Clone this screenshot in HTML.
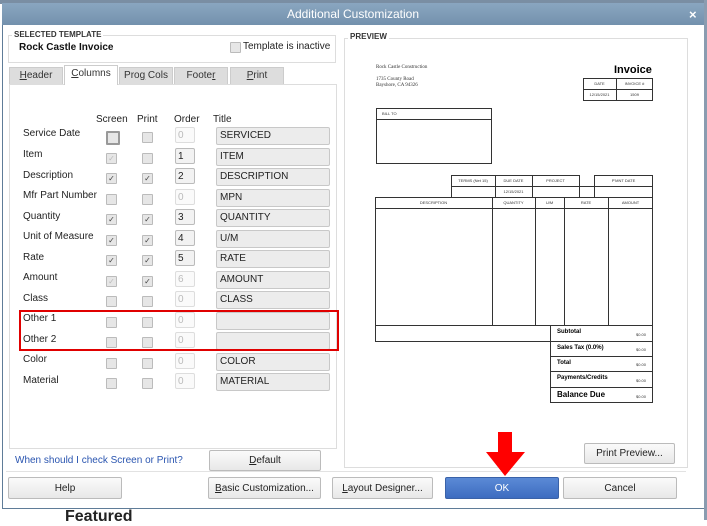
<!DOCTYPE html><html><head><style>
body{margin:0;width:707px;height:520px;background:#fff;font-family:"Liberation Sans",sans-serif;position:relative;overflow:hidden;font-size:10px}
.a{position:absolute}
.dlg{left:2px;top:3px;width:701px;height:504px;background:#fff;border:1px solid #5f7c98}
.title{left:2px;top:3px;width:702px;height:22px;background:linear-gradient(#8aa6c0,#7391ad);color:#fff;font-size:12px;text-align:center;line-height:22px}
.lbl{font-size:10px;color:#222}
.cb{width:9px;height:9px;border:1px solid #bbb;background:#e6e6e6;border-radius:1px;font-size:8px;line-height:9px;text-align:center;color:#444}
.ord{width:20px;height:16px;border:1px solid #ddd;border-radius:2px;background:#fafafa;color:#bbb;font-size:10px;line-height:16px;padding-left:2px;box-sizing:border-box}
.ord.on{border-color:#bbb;color:#222;background:#f2f2f2}
.tt{width:114px;height:18px;border:1px solid #c8c8c8;border-radius:2px;background:#ececec;font-size:10px;line-height:16px;padding-left:3px;box-sizing:border-box;color:#222}
.btn{height:21px;border:1px solid #bbb;border-radius:2px;background:linear-gradient(#fafafa,#e8e8e8);font-size:10px;text-align:center;line-height:20px;box-sizing:border-box;color:#222}
.tab{top:67px;height:17px;background:#ddd;border:1px solid #ccc;border-bottom:none;font-size:10px;text-align:center;line-height:16px;box-sizing:border-box;color:#333}
.b{border:1px solid #333;box-sizing:border-box}
.s{font-size:4px;color:#333;text-align:center}
</style></head><body>
<div class="a" style="left:0;top:0;width:707px;height:4px;background:#7a8ea3"></div>
<div class="a" style="left:65px;top:508px;font-size:16px;font-weight:bold;color:#222">Featured</div>
<div class="a dlg"></div>
<div class="a title">Additional Customization</div>
<div class="a" style="left:689px;top:7px;color:#fff;font-size:13px;font-weight:bold">×</div>
<div class="a" style="left:8px;top:35px;width:326px;height:26px;border:1px solid #ddd"></div>
<div class="a" style="left:12px;top:30px;background:#fff;padding:0 2px;font-size:8px;font-weight:bold;color:#333">SELECTED TEMPLATE</div>
<div class="a" style="left:19px;top:42px;font-size:10px;font-weight:bold;color:#111">Rock Castle Invoice</div>
<div class="a cb" style="left:230px;top:42px"></div>
<div class="a" style="left:243px;top:41px;font-size:10px;color:#222">Template is inactive</div>
<div class="a tab" style="left:9px;width:54px"><u>H</u>eader</div>
<div class="a tab" style="left:64px;width:54px;top:65px;height:20px;background:#fff;z-index:2"><u>C</u>olumns</div>
<div class="a tab" style="left:119px;width:54px">Pro<u>g</u> Cols</div>
<div class="a tab" style="left:174px;width:54px">Foote<u>r</u></div>
<div class="a tab" style="left:230px;width:54px"><u>P</u>rint</div>
<div class="a" style="left:9px;top:84px;width:326px;height:363px;border:1px solid #ddd"></div>
<div class="a lbl" style="left:96px;top:114px">Screen</div>
<div class="a lbl" style="left:137px;top:114px">Print</div>
<div class="a lbl" style="left:174px;top:114px">Order</div>
<div class="a lbl" style="left:213px;top:114px">Title</div>
<div class="a lbl" style="left:23px;top:128px">Service Date</div><div class="a cb" style="left:106px;top:131px;width:10px;height:10px;border:2px solid #999"></div><div class="a cb" style="left:142px;top:132px"></div><div class="a ord" style="left:175px;top:127px">0</div><div class="a tt" style="left:216px;top:127px">SERVICED</div>
<div class="a lbl" style="left:23px;top:149px">Item</div><div class="a cb" style="left:106px;top:153px;color:#bbb">✓</div><div class="a cb" style="left:142px;top:153px"></div><div class="a ord on" style="left:175px;top:148px">1</div><div class="a tt" style="left:216px;top:148px">ITEM</div>
<div class="a lbl" style="left:23px;top:170px">Description</div><div class="a cb" style="left:106px;top:173px">✓</div><div class="a cb" style="left:142px;top:173px">✓</div><div class="a ord on" style="left:175px;top:168px">2</div><div class="a tt" style="left:216px;top:168px">DESCRIPTION</div>
<div class="a lbl" style="left:23px;top:190px">Mfr Part Number</div><div class="a cb" style="left:106px;top:194px"></div><div class="a cb" style="left:142px;top:194px"></div><div class="a ord" style="left:175px;top:189px">0</div><div class="a tt" style="left:216px;top:189px">MPN</div>
<div class="a lbl" style="left:23px;top:211px">Quantity</div><div class="a cb" style="left:106px;top:214px">✓</div><div class="a cb" style="left:142px;top:214px">✓</div><div class="a ord on" style="left:175px;top:209px">3</div><div class="a tt" style="left:216px;top:209px">QUANTITY</div>
<div class="a lbl" style="left:23px;top:231px">Unit of Measure</div><div class="a cb" style="left:106px;top:235px">✓</div><div class="a cb" style="left:142px;top:235px">✓</div><div class="a ord on" style="left:175px;top:230px">4</div><div class="a tt" style="left:216px;top:230px">U/M</div>
<div class="a lbl" style="left:23px;top:252px">Rate</div><div class="a cb" style="left:106px;top:255px">✓</div><div class="a cb" style="left:142px;top:255px">✓</div><div class="a ord on" style="left:175px;top:250px">5</div><div class="a tt" style="left:216px;top:250px">RATE</div>
<div class="a lbl" style="left:23px;top:272px">Amount</div><div class="a cb" style="left:106px;top:276px;color:#bbb">✓</div><div class="a cb" style="left:142px;top:276px">✓</div><div class="a ord" style="left:175px;top:271px">6</div><div class="a tt" style="left:216px;top:271px">AMOUNT</div>
<div class="a lbl" style="left:23px;top:293px">Class</div><div class="a cb" style="left:106px;top:296px"></div><div class="a cb" style="left:142px;top:296px"></div><div class="a ord" style="left:175px;top:291px">0</div><div class="a tt" style="left:216px;top:291px">CLASS</div>
<div class="a lbl" style="left:23px;top:313px">Other 1</div><div class="a cb" style="left:106px;top:317px"></div><div class="a cb" style="left:142px;top:317px"></div><div class="a ord" style="left:175px;top:312px">0</div><div class="a tt" style="left:216px;top:312px"></div>
<div class="a lbl" style="left:23px;top:334px">Other 2</div><div class="a cb" style="left:106px;top:337px"></div><div class="a cb" style="left:142px;top:337px"></div><div class="a ord" style="left:175px;top:332px">0</div><div class="a tt" style="left:216px;top:332px"></div>
<div class="a lbl" style="left:23px;top:354px">Color</div><div class="a cb" style="left:106px;top:358px"></div><div class="a cb" style="left:142px;top:358px"></div><div class="a ord" style="left:175px;top:353px">0</div><div class="a tt" style="left:216px;top:353px">COLOR</div>
<div class="a lbl" style="left:23px;top:375px">Material</div><div class="a cb" style="left:106px;top:378px"></div><div class="a cb" style="left:142px;top:378px"></div><div class="a ord" style="left:175px;top:373px">0</div><div class="a tt" style="left:216px;top:373px">MATERIAL</div>
<div class="a" style="left:19px;top:310px;width:316px;height:37px;border:2px solid #e00000"></div>
<div class="a" style="left:15px;top:455px;color:#2a55b0;font-size:10px">When should I check Screen or Print?</div>
<div class="a btn" style="left:209px;top:450px;width:112px"><u>D</u>efault</div>
<div class="a" style="left:344px;top:38px;width:342px;height:428px;border:1px solid #ddd"></div>
<div class="a" style="left:348px;top:32px;background:#fff;padding:0 2px;font-size:8px;font-weight:bold;color:#333">PREVIEW</div>
<div class="a" style="left:376px;top:65px;font-family:'Liberation Serif',serif;font-size:5px;line-height:6px;color:#333">Rock Castle Construction<br><br style="line-height:3px">1735 County Road<br>Bayshore, CA 94326</div>
<div class="a" style="left:614px;top:64px;font-size:11px;font-weight:bold">Invoice</div>
<div class="a b" style="left:583px;top:78px;width:70px;height:23px"></div>
<div class="a" style="left:583px;top:89px;width:70px;border-top:1px solid #333"></div>
<div class="a" style="left:616px;top:78px;height:23px;border-left:1px solid #333"></div>
<div class="a s" style="left:583px;top:81px;width:33px">DATE</div><div class="a s" style="left:616px;top:81px;width:37px">INVOICE #</div>
<div class="a s" style="left:583px;top:92px;width:33px">12/15/2021</div><div class="a s" style="left:616px;top:92px;width:37px">1509</div>
<div class="a b" style="left:376px;top:108px;width:116px;height:56px"></div>
<div class="a" style="left:376px;top:119px;width:116px;border-top:1px solid #333"></div>
<div class="a s" style="left:382px;top:111px">BILL TO</div>
<div class="a b" style="left:451px;top:175px;width:129px;height:23px"></div>
<div class="a b" style="left:594px;top:175px;width:59px;height:23px"></div>
<div class="a" style="left:451px;top:186px;width:202px;border-top:1px solid #333"></div>
<div class="a" style="left:495px;top:175px;height:22px;border-left:1px solid #333"></div>
<div class="a" style="left:532px;top:175px;height:22px;border-left:1px solid #333"></div>
<div class="a s" style="left:451px;top:178px;width:44px">TERMS (Net 15)</div><div class="a s" style="left:495px;top:178px;width:37px">DUE DATE</div><div class="a s" style="left:532px;top:178px;width:47px">PROJECT</div><div class="a s" style="left:594px;top:178px;width:59px">P'MNT DATE</div>
<div class="a s" style="left:495px;top:189px;width:37px">12/15/2021</div>
<div class="a b" style="left:375px;top:197px;width:278px;height:145px"></div>
<div class="a" style="left:375px;top:208px;width:278px;border-top:1px solid #333"></div>
<div class="a" style="left:375px;top:325px;width:278px;border-top:1px solid #333"></div>
<div class="a" style="left:492px;top:197px;height:128px;border-left:1px solid #333"></div>
<div class="a" style="left:535px;top:197px;height:128px;border-left:1px solid #333"></div>
<div class="a" style="left:564px;top:197px;height:128px;border-left:1px solid #333"></div>
<div class="a" style="left:608px;top:197px;height:128px;border-left:1px solid #333"></div>
<div class="a s" style="left:375px;top:200px;width:117px">DESCRIPTION</div><div class="a s" style="left:492px;top:200px;width:43px">QUANTITY</div><div class="a s" style="left:535px;top:200px;width:29px">U/M</div><div class="a s" style="left:564px;top:200px;width:44px">RATE</div><div class="a s" style="left:608px;top:200px;width:45px">AMOUNT</div>
<div class="a b" style="left:550px;top:325px;width:103px;height:78px"></div>
<div class="a" style="left:550px;top:341px;width:103px;border-top:1px solid #333"></div>
<div class="a" style="left:550px;top:356px;width:103px;border-top:1px solid #333"></div>
<div class="a" style="left:550px;top:371px;width:103px;border-top:1px solid #333"></div>
<div class="a" style="left:550px;top:387px;width:103px;border-top:1px solid #333"></div>
<div class="a" style="left:557px;top:329px;font-size:6px;font-weight:bold">Subtotal</div>
<div class="a" style="left:557px;top:345px;font-size:6px;font-weight:bold">Sales Tax (0.0%)</div>
<div class="a" style="left:557px;top:360px;font-size:6px;font-weight:bold">Total</div>
<div class="a" style="left:557px;top:375px;font-size:6px;font-weight:bold">Payments/Credits</div>
<div class="a" style="left:557px;top:390px;font-size:8px;font-weight:bold">Balance Due</div>
<div class="a s" style="left:636px;top:332px">$0.00</div><div class="a s" style="left:636px;top:347px">$0.00</div><div class="a s" style="left:636px;top:362px">$0.00</div><div class="a s" style="left:636px;top:378px">$0.00</div><div class="a s" style="left:636px;top:394px">$0.00</div>
<div class="a btn" style="left:584px;top:443px;width:91px">Print Preview...</div>
<div class="a" style="left:6px;top:471px;width:680px;border-top:1px solid #e2e2e2"></div>
<div class="a btn" style="left:8px;top:477px;width:114px;height:22px;line-height:21px">Help</div>
<div class="a btn" style="left:208px;top:477px;width:113px;height:22px;line-height:21px"><u>B</u>asic Customization...</div>
<div class="a btn" style="left:332px;top:477px;width:101px;height:22px;line-height:21px"><u>L</u>ayout Designer...</div>
<div class="a btn" style="left:445px;top:477px;width:114px;height:22px;line-height:21px;background:linear-gradient(#5b8ad6,#3d6cc0);border-color:#3a62a8;color:#fff">OK</div>
<div class="a btn" style="left:563px;top:477px;width:114px;height:22px;line-height:21px">Cancel</div>
<svg class="a" style="left:485px;top:432px" width="42" height="45"><path d="M13 0H27V20H40L20 44L1 20H13Z" fill="#f00"/></svg>
<div class="a" style="left:704px;top:0;width:3px;height:520px;background:#8a9cb0"></div>
</body></html>
